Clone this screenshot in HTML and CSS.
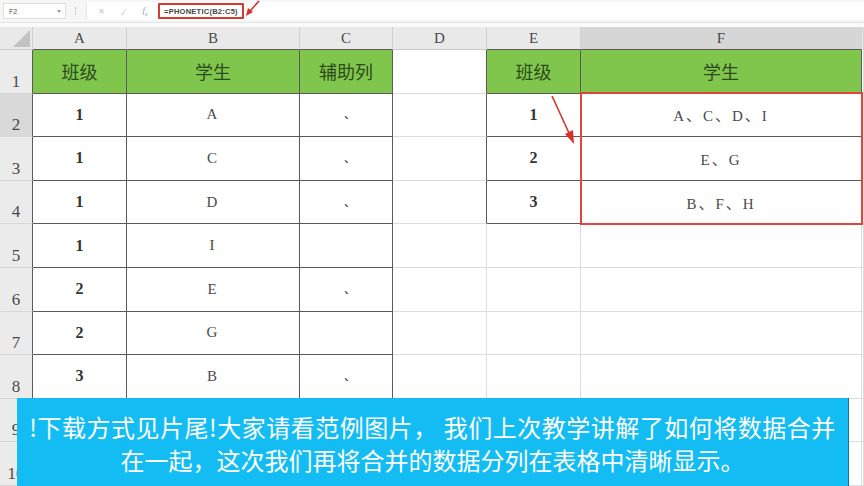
FILE: index.html
```html
<!DOCTYPE html>
<html lang="zh-CN">
<head>
<meta charset="utf-8">
<title>PHONETIC</title>
<link rel="stylesheet" href="styles.css">
</head>
<body>
<div class="page">
  <div class="toolbar">
    <div class="namebox"><span>F2</span><span class="caret"></span></div>
    <div class="sep"></div>
    <div class="fbar">
      <span class="ico">✕</span>
      <span class="ico">✓</span>
      <span class="ico fx">f<sub>x</sub></span>
      <span class="formula">=PHONETIC(B2:C5)</span>
    </div>
  </div>
  <div class="gap"></div>
  <div class="sheet">
    <div class="ch corner"><span class="tri"></span></div>
    <div class="ch dk">A</div>
    <div class="ch dk">B</div>
    <div class="ch dk">C</div>
    <div class="ch">D</div>
    <div class="ch dk">E</div>
    <div class="ch dk sel">F</div>
    <div class="ch last"></div>

    <div class="rh dk">1</div>
    <div class="c t g">班级</div>
    <div class="c t g">学生</div>
    <div class="c t g">辅助列</div>
    <div class="c dk"></div>
    <div class="c t g">班级</div>
    <div class="c t g">学生</div>
    <div class="c"></div>

    <div class="rh dk sel">2</div>
    <div class="c t n">1</div>
    <div class="c t v">A</div>
    <div class="c t d">、</div>
    <div class="c dk"></div>
    <div class="c t n">1</div>
    <div class="c t v">A、C、D、I</div>
    <div class="c"></div>

    <div class="rh dk">3</div>
    <div class="c t n">1</div>
    <div class="c t v">C</div>
    <div class="c t d">、</div>
    <div class="c dk"></div>
    <div class="c t n">2</div>
    <div class="c t v">E、G</div>
    <div class="c"></div>

    <div class="rh dk">4</div>
    <div class="c t n">1</div>
    <div class="c t v">D</div>
    <div class="c t d">、</div>
    <div class="c dk"></div>
    <div class="c t n">3</div>
    <div class="c t v">B、F、H</div>
    <div class="c"></div>

    <div class="rh dk">5</div>
    <div class="c t n">1</div>
    <div class="c t v">I</div>
    <div class="c t d"></div>
    <div class="c"></div>
    <div class="c"></div>
    <div class="c"></div>
    <div class="c"></div>

    <div class="rh dk">6</div>
    <div class="c t n">2</div>
    <div class="c t v">E</div>
    <div class="c t d">、</div>
    <div class="c"></div>
    <div class="c"></div>
    <div class="c"></div>
    <div class="c"></div>

    <div class="rh dk">7</div>
    <div class="c t n">2</div>
    <div class="c t v">G</div>
    <div class="c t d"></div>
    <div class="c"></div>
    <div class="c"></div>
    <div class="c"></div>
    <div class="c"></div>

    <div class="rh dk">8</div>
    <div class="c t n">3</div>
    <div class="c t v">B</div>
    <div class="c t d">、</div>
    <div class="c"></div>
    <div class="c"></div>
    <div class="c"></div>
    <div class="c"></div>

    <div class="rh">9</div>
    <div class="c"></div>
    <div class="c"></div>
    <div class="c"></div>
    <div class="c"></div>
    <div class="c"></div>
    <div class="c"></div>
    <div class="c"></div>

    <div class="rh">10</div>
    <div class="c"></div>
    <div class="c"></div>
    <div class="c"></div>
    <div class="c"></div>
    <div class="c"></div>
    <div class="c"></div>
    <div class="c"></div>
  </div>

  <svg class="arrow1" width="20" height="20" viewBox="0 0 20 20">
    <line x1="16" y1="1" x2="7" y2="11" stroke="#d9302a" stroke-width="1.6"/>
    <polygon points="3,16 5,8 10,12" fill="#d9302a"/>
  </svg>
  <div class="redbox"></div>
  <svg class="arrow2" width="30" height="52" viewBox="0 0 30 52">
    <line x1="2" y1="1" x2="19" y2="38" stroke="#d9302a" stroke-width="1.6"/>
    <polygon points="24,49 15,39 23,35" fill="#d9302a"/>
  </svg>

  <div class="subtitle">
    <p class="l1">!下载方式见片尾!大家请看范例图片， 我们上次教学讲解了如何将数据合并</p>
    <p>在一起，这次我们再将合并的数据分列在表格中清晰显示。</p>
  </div>
</div>
</body>
</html>
```

FILE: styles.css
```css
html, body {
  margin: 0;
  padding: 0;
  background: #ffffff;
  overflow: hidden;
}
.page {
  position: relative;
  width: 864px;
  height: 486px;
  overflow: hidden;
  font-family: "Liberation Serif", "Noto Sans CJK SC", serif;
}
.toolbar {
  height: 23px;
  background: #f6f6f6;
  display: flex;
  align-items: center;
  box-sizing: border-box;
  border-bottom: 1px solid #e4e4e4;
}
.namebox {
  margin-left: 3px;
  width: 63px;
  height: 16px;
  box-sizing: border-box;
  background: #fff;
  border: 1px solid #e0e0e0;
  display: flex;
  align-items: center;
  justify-content: space-between;
  padding: 0 4px 0 5px;
  font-family: "Liberation Sans", sans-serif;
  font-size: 7px;
  color: #555;
}
.caret {
  width: 0;
  height: 0;
  border-left: 2px solid transparent;
  border-right: 2px solid transparent;
  border-top: 3px solid #999;
}
.sep {
  width: 1px;
  height: 8px;
  margin: 0 9px 0 9px;
  border-left: 1px dotted #bbb;
}
.fbar {
  flex: 1;
  height: 18px;
  background: #fff;
  border-left: 1px solid #e6e6e6;
  display: flex;
  align-items: center;
  font-family: "Liberation Sans", sans-serif;
}
.ico {
  color: #c4c4c4;
  font-size: 8px;
  width: 22px;
  text-align: center;
}
.ico:first-child { margin-left: 3px; }
.fx {
  font-family: "Liberation Serif", serif;
  font-style: italic;
  color: #999;
  font-size: 9px;
}
.fx sub { font-size: 6px; }
.formula {
  margin-left: 2px;
  height: 16px;
  box-sizing: border-box;
  border: 2px solid #d33a30;
  border-radius: 1px;
  padding: 0 4px;
  display: flex;
  align-items: center;
  font-size: 7.5px;
  font-weight: bold;
  color: #444;
  letter-spacing: 0.25px;
}
.gap {
  height: 4px;
  background: #fbfbfb;
}
.sheet {
  display: grid;
  grid-template-columns: 33px 94px 173px 93px 94px 94px 281px 1fr;
  grid-template-rows: 23px repeat(10, 43.6px);
}
.ch {
  background: #e9e9e9;
  box-sizing: border-box;
  border-right: 1px solid #d2d2d2;
  border-bottom: 1px solid #c9c9c9;
  display: flex;
  align-items: center;
  justify-content: center;
  font-size: 15px;
  color: #4a4a4a;
  padding-top: 1px;
}
.ch.dk { border-bottom-color: #5a5a5a; }
.ch.sel { background: #d6d6d6; }
.corner { position: relative; }
.tri {
  position: absolute;
  right: 2px;
  bottom: 2px;
  width: 0;
  height: 0;
  border-left: 17px solid transparent;
  border-bottom: 17px solid #c2c2c2;
}
.rh {
  background: #ebebeb;
  box-sizing: border-box;
  border-right: 1px solid #d0d0d0;
  border-bottom: 1px solid #d6d6d6;
  display: flex;
  align-items: flex-end;
  justify-content: center;
  font-size: 17px;
  line-height: 18px;
  color: #4a4a4a;
  padding-bottom: 2px;
  overflow: hidden;
}
.rh.dk { border-right-color: #5a5a5a; }
.rh.sel { background: #d9d9d9; }
.c {
  box-sizing: border-box;
  border-right: 1px solid #dcdcdc;
  border-bottom: 1px solid #dcdcdc;
  display: flex;
  align-items: center;
  justify-content: center;
  background: #fff;
}
.c.dk { border-right-color: #5a5a5a; }
.c.t {
  border-right-color: #5a5a5a;
  border-bottom-color: #5a5a5a;
}
.c.g {
  background: #80c64c;
  color: #2d4a1c;
  font-family: "Noto Sans CJK SC", sans-serif;
  font-size: 18px;
}
.c.n {
  font-weight: bold;
  font-size: 16px;
  color: #333;
}
.c.v {
  font-size: 15px;
  color: #4a4a4a;
  letter-spacing: 2px;
}
.c.d {
  font-family: "Noto Sans CJK SC", sans-serif;
  font-size: 12px;
  color: #333;
  padding-left: 8px;
  padding-bottom: 2px;
}
.redbox {
  position: absolute;
  left: 580px;
  top: 92px;
  width: 283px;
  height: 133px;
  box-sizing: border-box;
  border: 2px solid #e2453b;
}
.arrow1 {
  position: absolute;
  left: 243px;
  top: 0;
}
.arrow2 {
  position: absolute;
  left: 550px;
  top: 95px;
}
.subtitle {
  position: absolute;
  left: 17px;
  top: 398px;
  width: 832px;
  height: 88px;
  box-sizing: border-box;
  background: #13bdf4;
  border-right: 1px solid #1b6f90;
  padding-top: 12px;
  font-family: "Noto Sans CJK SC", sans-serif;
  font-size: 24px;
  line-height: 33px;
  color: #ffffff;
  text-align: center;
}
.subtitle p {
  margin: 0;
  white-space: nowrap;
}
.subtitle .l1 {
  letter-spacing: 0.5px;
}
```
